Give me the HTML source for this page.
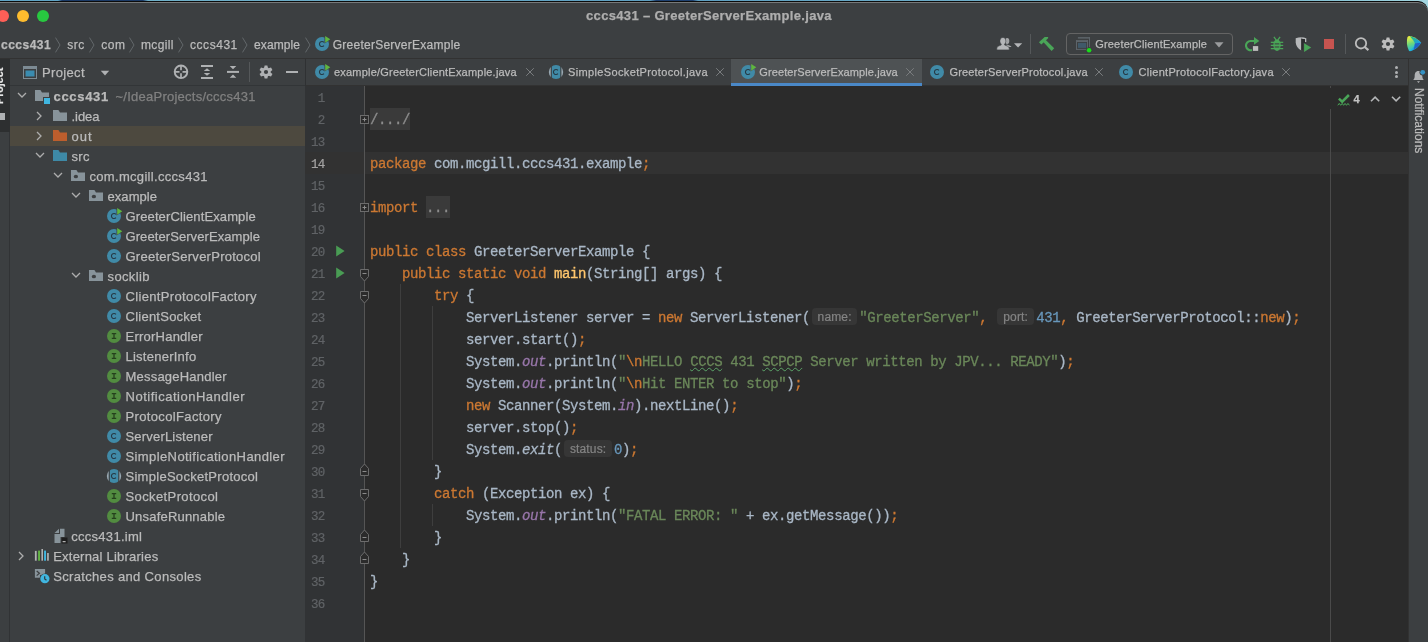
<!DOCTYPE html>
<html><head><meta charset='utf-8'><title>cccs431 – GreeterServerExample.java</title>
<style>
html,body{margin:0;padding:0}
body{width:1428px;height:642px;overflow:hidden;position:relative;background:#3c3f41;font-family:"Liberation Sans", sans-serif;}
#root{position:absolute;left:0;top:0;width:1428px;height:642px;overflow:hidden;will-change:transform}
.b{position:absolute;display:block}
.t{position:absolute;white-space:pre;font-family:"Liberation Sans", sans-serif;-webkit-text-stroke:0.25px currentColor}
.ln{position:absolute;left:300px;width:24.4px;text-align:right;height:22px;font:12.5px/22px "Liberation Mono", monospace;letter-spacing:-0.75px;white-space:pre;margin-top:2px;-webkit-text-stroke:0.2px currentColor}
.cl{position:absolute;left:370px;margin-top:1px;height:22px;font:14px/22px "Liberation Mono", monospace;letter-spacing:-0.4px;white-space:pre;color:#a9b7c6;-webkit-text-stroke:0.3px currentColor}
.fold{background:#3a3a3a;box-shadow:0 -1px 0 #3a3a3a;color:#8c8c8c;display:inline-block;height:21px;vertical-align:top}
.hint{display:inline-block;height:22px;vertical-align:top;position:relative}
.hi{-webkit-text-stroke:0.2px currentColor;position:absolute;left:2px;right:2px;top:1px;height:17px;background:#363636;color:#848484;border-radius:4px;font:12px/19px "Liberation Sans", sans-serif;letter-spacing:0.15px;text-align:center}
.typo{text-decoration:underline wavy #5ba468;text-decoration-thickness:1.2px;text-underline-offset:0.5px;text-decoration-skip-ink:none}
</style></head>
<body>
<div id='root'>
<div class='b' style='left:0;top:0;width:1428px;height:12px;background:linear-gradient(90deg,#5fa3c4 0,#5fa3c4 58px,#1b3a66 62px,#1b3a66 143px,#6fb0c8 148px,#5e9fc0 650px,#1f4170 656px,#1f4170 693px,#5e9fc0 698px,#7fbdd0 1300px,#a2d6e0 1428px)'></div>
<div class='b' style='left:-10px;top:1px;width:1438px;height:660px;background:#3c3f41;border-top:1px solid #0b0b0b;border-top-right-radius:10px;box-shadow:inset 0 1px 0 #77797a'></div>
<div class='b' style='left:-3px;top:10px;width:12px;height:12px;background:#fe5f57;border-radius:50%'></div>
<div class='b' style='left:17px;top:10px;width:12px;height:12px;background:#febc2e;border-radius:50%'></div>
<div class='b' style='left:37px;top:10px;width:12px;height:12px;background:#28c840;border-radius:50%'></div>
<div class='t ' style='left:586.00px;top:5.50px;height:20px;line-height:20px;font-size:13px;color:#aeaeae;letter-spacing:0.333px;font-weight:bold;'>cccs431 – GreeterServerExample.java</div>
<div class='t ' style='left:1.00px;top:35.00px;height:20px;line-height:20px;font-size:12px;color:#bbbbbb;letter-spacing:0.497px;font-weight:bold;'>cccs431</div>
<svg class='b' style='left:53.75px;top:36px;' width='8' height='18' viewBox='0 0 8 18'><path d='M1.5 1.6 L6 9 L1.5 16.4' fill='none' stroke='#62676a' stroke-width='1'/></svg>
<div class='t ' style='left:67.30px;top:35.00px;height:20px;line-height:20px;font-size:12px;color:#bbbbbb;letter-spacing:0.500px;'>src</div>
<svg class='b' style='left:87.75px;top:36px;' width='8' height='18' viewBox='0 0 8 18'><path d='M1.5 1.6 L6 9 L1.5 16.4' fill='none' stroke='#62676a' stroke-width='1'/></svg>
<div class='t ' style='left:101.30px;top:35.00px;height:20px;line-height:20px;font-size:12px;color:#bbbbbb;letter-spacing:0.514px;'>com</div>
<svg class='b' style='left:127.75px;top:36px;' width='8' height='18' viewBox='0 0 8 18'><path d='M1.5 1.6 L6 9 L1.5 16.4' fill='none' stroke='#62676a' stroke-width='1'/></svg>
<div class='t ' style='left:141.00px;top:35.00px;height:20px;line-height:20px;font-size:12px;color:#bbbbbb;letter-spacing:0.326px;'>mcgill</div>
<svg class='b' style='left:176.95px;top:36px;' width='8' height='18' viewBox='0 0 8 18'><path d='M1.5 1.6 L6 9 L1.5 16.4' fill='none' stroke='#62676a' stroke-width='1'/></svg>
<div class='t ' style='left:190.00px;top:35.00px;height:20px;line-height:20px;font-size:12px;color:#bbbbbb;letter-spacing:0.545px;'>cccs431</div>
<svg class='b' style='left:240.85px;top:36px;' width='8' height='18' viewBox='0 0 8 18'><path d='M1.5 1.6 L6 9 L1.5 16.4' fill='none' stroke='#62676a' stroke-width='1'/></svg>
<div class='t ' style='left:254.00px;top:35.00px;height:20px;line-height:20px;font-size:12px;color:#bbbbbb;letter-spacing:0.107px;'>example</div>
<svg class='b' style='left:303.85px;top:36px;' width='8' height='18' viewBox='0 0 8 18'><path d='M1.5 1.6 L6 9 L1.5 16.4' fill='none' stroke='#62676a' stroke-width='1'/></svg>
<svg class='b' style='left:314px;top:36px;overflow:visible' width='16' height='16' viewBox='0 0 16 16'><circle cx='8' cy='8' r='7' fill='#408aa7'/><path d='M10.5 -0.7 L17 3.3 L10.5 7.6 Z' fill='#3c3f41'/><path d='M9.95 9.65 A2.55 2.55 0 1 1 9.95 6.35' fill='none' stroke='#263a45' stroke-width='1.1'/><path d='M11.2 0 L16.3 3.3 L11.2 6.8 Z' fill='#5fb640'/></svg>
<div class='t ' style='left:332.70px;top:35.00px;height:20px;line-height:20px;font-size:12px;color:#bbbbbb;letter-spacing:0.257px;'>GreeterServerExample</div>
<svg class='b' style='left:996px;top:36px;' width='16' height='16' viewBox='0 0 16 16'><g fill='#b4b6b8'><ellipse cx='11.2' cy='5.000' rx='2.1' ry='3' opacity='.85'/><path d='M10.500 8.200 L15.200 10.200 V11 H10.500z' opacity='.85'/><ellipse cx='6.900' cy='5.100' rx='2.900' ry='3.500' stroke='#3c3f41' stroke-width='.8'/><path d='M0.800 13.900 V12 C0.800 10.700 3 9.800 5.200 9 V7.500 H8.600 V9 C10.800 9.800 13.200 10.700 13.200 12 V13.900z' stroke='#3c3f41' stroke-width='.6'/><ellipse cx='6.900' cy='5.100' rx='2.500' ry='3.200'/></g></svg>
<svg class='b' style='left:1014px;top:42.5px;' width='9' height='5' viewBox='0 0 9 5'><path d='M0 0.300H8.200L4.100 4.600z' fill='#b4b6b8'/></svg>
<div class='b' style='left:1030px;top:34px;width:1px;height:20px;background:#55585a;'></div>
<svg class='b' style='left:1038px;top:35px;' width='17' height='17' viewBox='0 0 17 17'><g fill='#4aa558'><path d='M0.900 7.300 L6.700 2.100 H10.100 V3.200 L3.400 9.400z'/><path d='M4.900 6.600 L7.500 4.700 L16.200 13.300 L13.600 15.900z'/></g></svg>
<div class='b' style='left:1066px;top:33px;width:167px;height:22px;box-sizing:border-box;border:1px solid #646464;border-radius:4px'></div>
<svg class='b' style='left:1075px;top:36px;' width='18' height='18' viewBox='0 0 18 18'><g fill='#5d646a'><rect x='2.900' y='1.100' width='12.100' height='1.500'/><rect x='14' y='1.100' width='1' height='10'/><rect x='1' y='4.100' width='12' height='1.900'/><rect x='1' y='4.100' width='1' height='9.800'/><rect x='12' y='4.100' width='1' height='9.800'/><rect x='1' y='12.900' width='12' height='1'/></g><rect x='3' y='6.900' width='8.200' height='5' fill='#40596a'/><circle cx='14.100' cy='14.200' r='3' fill='#3c3f41'/><circle cx='14.100' cy='14.200' r='2.300' fill='#19dd19'/></svg>
<div class='t ' style='left:1095.20px;top:34.00px;height:20px;line-height:20px;font-size:11px;color:#bbbbbb;letter-spacing:0.188px;'>GreeterClientExample</div>
<svg class='b' style='left:1214px;top:41.5px;' width='10' height='6' viewBox='0 0 10 6'><path d='M0.500 0.300H9.500L5 5.500z' fill='#9a9c9e'/></svg>
<svg class='b' style='left:1244.7px;top:36px;' width='16' height='16' viewBox='0 0 16 16'><path d='M9.500 5 H5.800 A4.600 4.600 0 1 0 7.100 13.950' fill='none' stroke='#4aa558' stroke-width='2.100'/><path d='M9 0.900 L14.300 4.900 L9 8.800z' fill='#4aa558'/><rect x='7.200' y='9.400' width='6.800' height='6.300' fill='#3c3f41'/><rect x='7.900' y='10.100' width='5.300' height='4.800' fill='#bdbdbd'/></svg>
<svg class='b' style='left:1269px;top:36px;' width='16' height='16' viewBox='0 0 16 16'><g fill='#4aa558'><ellipse cx='8' cy='9.100' rx='3.700' ry='5.900'/><rect x='1.800' y='5.700' width='12.400' height='1.250'/><rect x='1.800' y='8.800' width='12.400' height='1.250'/><rect x='1.800' y='12' width='12.400' height='1.250'/></g><path d='M4.900 0.900 L7.100 3.800M11.100 0.900 L8.900 3.800' stroke='#4aa558' stroke-width='1.300'/><rect x='5.700' y='7.350' width='4.600' height='1.050' fill='#3c3f41'/><rect x='5.700' y='10.450' width='4.600' height='1.050' fill='#3c3f41'/></svg>
<svg class='b' style='left:1295px;top:36px;' width='17' height='17' viewBox='0 0 17 17'><path d='M0.700 2.300 Q3.500 1.300 6.300 1.300 V14.400 Q1.300 12.200 0.700 6.500z' fill='#b6b8ba'/><path d='M6.300 1.300 Q9 1.300 11.300 2.300 V6 H10 V3.300 Q8 2.700 6.300 2.700z' fill='#b6b8ba'/><path d='M6.300 2.700 Q8 2.700 10 3.300 V7 L9 7 V13 Q7.500 14 6.300 14.400z' fill='#2b2d2e'/><path d='M8.300 6.600 L9.100 7.300 V15.800 L8.300 16.400z' fill='#3c3f41'/><path d='M9.100 7.300 L16.200 11.500 L9.100 16.100z' fill='#4aa558'/></svg>
<div class='b' style='left:1324px;top:39px;width:10px;height:10px;background:#c75450;'></div>
<div class='b' style='left:1345px;top:34px;width:1px;height:20px;background:#55585a;'></div>
<svg class='b' style='left:1354px;top:36px;' width='16' height='16' viewBox='0 0 16 16'><circle cx='7' cy='7.300' r='5.200' fill='none' stroke='#bdbdbd' stroke-width='1.800'/><path d='M10.700 11 L14.400 14.100' stroke='#bdbdbd' stroke-width='2.200'/></svg>
<svg class='b' style='left:1380px;top:36px;' width='16' height='16' viewBox='0 0 16 16'><g fill='#bdbdbd'><circle cx='8' cy='8' r='4.7'/><path d='M6.1 4 L6.6 1.4 H9.4 L9.9 4z' transform='rotate(0 8 8)'/><path d='M6.1 4 L6.6 1.4 H9.4 L9.9 4z' transform='rotate(60 8 8)'/><path d='M6.1 4 L6.6 1.4 H9.4 L9.9 4z' transform='rotate(120 8 8)'/><path d='M6.1 4 L6.6 1.4 H9.4 L9.9 4z' transform='rotate(180 8 8)'/><path d='M6.1 4 L6.6 1.4 H9.4 L9.9 4z' transform='rotate(240 8 8)'/><path d='M6.1 4 L6.6 1.4 H9.4 L9.9 4z' transform='rotate(300 8 8)'/></g><circle cx='8' cy='8' r='2.1' fill='#3c3f41'/></svg>
<svg class='b' style='left:1406px;top:36px;overflow:visible' width='16' height='16' viewBox='0 0 16 16'><defs><linearGradient id='lg1' x1='0.1' y1='0' x2='0.450' y2='1'><stop offset='0' stop-color='#fdf23a'/><stop offset='.5' stop-color='#6fd87a'/><stop offset='1' stop-color='#12b4f0'/></linearGradient><linearGradient id='lg2' x1='0' y1='0' x2='1' y2='0.500'><stop offset='0' stop-color='#2fc46f'/><stop offset='1' stop-color='#1a9be0'/></linearGradient></defs><path d='M1.500 1.100 Q2.500 -0.300 5 0.300 Q11 2 15.200 6.800 Q12 12.500 5 15 Q3.300 15.500 2.800 14.500 Q-0.300 8 1.500 1.100z' fill='url(#lg1)'/><path d='M3.500 0.100 Q10.500 1.800 15.200 6.800 L8.900 7.300 Q7 3.500 3.500 0.100z' fill='url(#lg2)'/><path d='M8.900 7.300 L15.200 6.800 Q12.500 11.500 7.300 14z' fill='#1f62c8'/><path d='M8.900 7.300 Q8.800 11 7.300 14 Q5 15 3.500 15.300 Q8 12 8.900 7.300z' fill='#14a6e8' opacity='.6'/></svg>
<div class='b' style='left:0px;top:58px;width:1428px;height:1px;background:#323232;'></div>
<div class='b' style='left:0px;top:59px;width:10px;height:73px;background:#2d2f30;'></div>
<div class='b' style='left:0;top:59px;width:10px;height:73px;overflow:hidden'><div style='position:absolute;left:-8.1px;top:45px;width:0;height:0'><div style='position:absolute;transform-origin:0 0;transform:rotate(-90deg);white-space:pre;font:bold 10.7px "Liberation Sans", sans-serif;color:#e6e6e6;-webkit-text-stroke:0.2px currentColor;line-height:14px;letter-spacing:0'>Project</div></div></div>
<div class='b' style='left:0px;top:113px;width:5px;height:7px;background:#afb1b3;'></div>
<div class='b' style='left:9px;top:132px;width:1px;height:600px;background:#313335;'></div>
<svg class='b' style='left:23px;top:65.5px;' width='14' height='13' viewBox='0 0 14 13'><rect x='.5' y='.5' width='13' height='12' fill='none' stroke='#7d8b94'/><rect x='.5' y='.5' width='13' height='2.5' fill='#7d8b94'/><rect x='2.5' y='4.5' width='9' height='6' fill='#3a8cb0'/></svg>
<div class='t ' style='left:42.00px;top:63.00px;height:20px;line-height:20px;font-size:13px;color:#bbbbbb;letter-spacing:0.339px;'>Project</div>
<svg class='b' style='left:100px;top:70px;' width='10' height='6' viewBox='0 0 10 6'><path d='M0.800 0.800H9.200L5 5.600z' fill='#afb1b3'/></svg>
<svg class='b' style='left:173px;top:64px;' width='16' height='16' viewBox='0 0 16 16'><circle cx='8' cy='7.8' r='6.3' fill='none' stroke='#afb1b3' stroke-width='1.9'/><path d='M8 1.5v4.8M8 9.3V14M1.5 7.8h5M9.5 7.8H14.5' stroke='#afb1b3' stroke-width='1.7'/></svg>
<svg class='b' style='left:200px;top:64px;' width='14' height='16' viewBox='0 0 14 16'><g fill='#afb1b3'><rect x='1' y='1' width='12' height='2'/><rect x='1' y='13' width='12' height='2'/><path d='M7 4.2L10.2 6.9H3.800zM7 11.800L3.800 9.100h6.400z'/></g></svg>
<svg class='b' style='left:226px;top:64px;' width='14' height='16' viewBox='0 0 14 16'><g fill='#afb1b3'><rect x='1' y='6.900' width='12' height='2'/><path d='M7 5.2L3.700 2.100h6.600zM7 10.600l3.300 3.100H3.700z'/></g></svg>
<div class='b' style='left:249px;top:62px;width:1px;height:20px;background:#55585a;'></div>
<svg class='b' style='left:258px;top:64px;' width='16' height='16' viewBox='0 0 16 16'><g fill='#afb1b3'><circle cx='8' cy='8' r='4.7'/><path d='M6.1 4 L6.6 1.4 H9.4 L9.9 4z' transform='rotate(0 8 8)'/><path d='M6.1 4 L6.6 1.4 H9.4 L9.9 4z' transform='rotate(60 8 8)'/><path d='M6.1 4 L6.6 1.4 H9.4 L9.9 4z' transform='rotate(120 8 8)'/><path d='M6.1 4 L6.6 1.4 H9.4 L9.9 4z' transform='rotate(180 8 8)'/><path d='M6.1 4 L6.6 1.4 H9.4 L9.9 4z' transform='rotate(240 8 8)'/><path d='M6.1 4 L6.6 1.4 H9.4 L9.9 4z' transform='rotate(300 8 8)'/></g><circle cx='8' cy='8' r='2.1' fill='#3c3f41'/></svg>
<div class='b' style='left:286px;top:71px;width:12px;height:2px;background:#afb1b3;'></div>
<div class='b' style='left:10px;top:85px;width:295px;height:1px;background:#323537;'></div>
<div class='b' style='left:10px;top:126px;width:295px;height:20px;background:#4d493f;'></div>
<svg class='b' style='left:15.55px;top:91.25px;' width='12' height='8' viewBox='0 0 12 8'><path d='M2 2 L6 6 L10 2' fill='none' stroke='#adadad' stroke-width='1.3'/></svg>
<svg class='b' style='left:34px;top:88px;overflow:visible' width='16' height='16' viewBox='0 0 16 16'><path d='M1 2 H6.4 L8 4.5 H15 V13 H1 Z' fill='#87939a'/><rect x='9' y='9' width='8' height='8' fill='#3c3f41'/><rect x='10' y='10' width='6' height='6' fill='#40b6e0'/></svg>
<div class='t ' style='left:53.50px;top:87.00px;height:20px;line-height:20px;font-size:13px;color:#bbbbbb;letter-spacing:0.679px;font-weight:bold;'>cccs431</div>
<div class='t ' style='left:115.50px;top:87.00px;height:20px;line-height:20px;font-size:13px;color:#808080;letter-spacing:0.249px;'>~/IdeaProjects/cccs431</div>
<svg class='b' style='left:35.2px;top:109.65px;' width='8' height='12' viewBox='0 0 8 12'><path d='M2 2 L6 6 L2 10' fill='none' stroke='#adadad' stroke-width='1.3'/></svg>
<svg class='b' style='left:52px;top:108px;overflow:visible' width='16' height='16' viewBox='0 0 16 16'><path d='M1 2 H6.4 L8 4.5 H15 V13 H1 Z' fill='#87939a'/></svg>
<div class='t ' style='left:71.50px;top:107.00px;height:20px;line-height:20px;font-size:13px;color:#bbbbbb;letter-spacing:-0.051px;'>.idea</div>
<svg class='b' style='left:35.2px;top:129.65px;' width='8' height='12' viewBox='0 0 8 12'><path d='M2 2 L6 6 L2 10' fill='none' stroke='#adadad' stroke-width='1.3'/></svg>
<svg class='b' style='left:52px;top:128px;overflow:visible' width='16' height='16' viewBox='0 0 16 16'><path d='M1 2 H6.4 L8 4.5 H15 V13 H1 Z' fill='#bd5e2d'/></svg>
<div class='t ' style='left:71.50px;top:127.00px;height:20px;line-height:20px;font-size:13px;color:#bbbbbb;letter-spacing:0.961px;'>out</div>
<svg class='b' style='left:33.55px;top:151.25px;' width='12' height='8' viewBox='0 0 12 8'><path d='M2 2 L6 6 L10 2' fill='none' stroke='#adadad' stroke-width='1.3'/></svg>
<svg class='b' style='left:52px;top:148px;overflow:visible' width='16' height='16' viewBox='0 0 16 16'><path d='M1 2 H6.4 L8 4.5 H15 V13 H1 Z' fill='#3e89a6'/></svg>
<div class='t ' style='left:71.50px;top:147.00px;height:20px;line-height:20px;font-size:13px;color:#bbbbbb;letter-spacing:0.328px;'>src</div>
<svg class='b' style='left:51.55px;top:171.25px;' width='12' height='8' viewBox='0 0 12 8'><path d='M2 2 L6 6 L10 2' fill='none' stroke='#adadad' stroke-width='1.3'/></svg>
<svg class='b' style='left:70px;top:168px;overflow:visible' width='16' height='16' viewBox='0 0 16 16'><path d='M1 2 H6.4 L8 4.5 H15 V13 H1 Z' fill='#87939a'/><ellipse cx='5.9' cy='8.5' rx='2.1' ry='1.85' fill='#3c3f41'/></svg>
<div class='t ' style='left:89.50px;top:167.00px;height:20px;line-height:20px;font-size:13px;color:#bbbbbb;letter-spacing:0.312px;'>com.mcgill.cccs431</div>
<svg class='b' style='left:69.55px;top:191.25px;' width='12' height='8' viewBox='0 0 12 8'><path d='M2 2 L6 6 L10 2' fill='none' stroke='#adadad' stroke-width='1.3'/></svg>
<svg class='b' style='left:88px;top:188px;overflow:visible' width='16' height='16' viewBox='0 0 16 16'><path d='M1 2 H6.4 L8 4.5 H15 V13 H1 Z' fill='#87939a'/><ellipse cx='5.9' cy='8.5' rx='2.1' ry='1.85' fill='#3c3f41'/></svg>
<div class='t ' style='left:107.50px;top:187.00px;height:20px;line-height:20px;font-size:13px;color:#bbbbbb;letter-spacing:0.060px;'>example</div>
<svg class='b' style='left:106px;top:208px;overflow:visible' width='16' height='16' viewBox='0 0 16 16'><circle cx='8' cy='8' r='7' fill='#408aa7'/><path d='M10.5 -0.7 L17 3.3 L10.5 7.6 Z' fill='#3c3f41'/><path d='M9.95 9.65 A2.55 2.55 0 1 1 9.95 6.35' fill='none' stroke='#263a45' stroke-width='1.1'/><path d='M11.2 0 L16.3 3.3 L11.2 6.8 Z' fill='#5fb640'/></svg>
<div class='t ' style='left:125.50px;top:207.00px;height:20px;line-height:20px;font-size:13px;color:#bbbbbb;letter-spacing:0.122px;'>GreeterClientExample</div>
<svg class='b' style='left:106px;top:228px;overflow:visible' width='16' height='16' viewBox='0 0 16 16'><circle cx='8' cy='8' r='7' fill='#408aa7'/><path d='M10.5 -0.7 L17 3.3 L10.5 7.6 Z' fill='#3c3f41'/><path d='M9.95 9.65 A2.55 2.55 0 1 1 9.95 6.35' fill='none' stroke='#263a45' stroke-width='1.1'/><path d='M11.2 0 L16.3 3.3 L11.2 6.8 Z' fill='#5fb640'/></svg>
<div class='t ' style='left:125.50px;top:227.00px;height:20px;line-height:20px;font-size:13px;color:#bbbbbb;letter-spacing:0.081px;'>GreeterServerExample</div>
<svg class='b' style='left:106px;top:248px;overflow:visible' width='16' height='16' viewBox='0 0 16 16'><circle cx='8' cy='8' r='7' fill='#408aa7'/><path d='M9.95 9.65 A2.55 2.55 0 1 1 9.95 6.35' fill='none' stroke='#263a45' stroke-width='1.1'/></svg>
<div class='t ' style='left:125.50px;top:247.00px;height:20px;line-height:20px;font-size:13px;color:#bbbbbb;letter-spacing:0.257px;'>GreeterServerProtocol</div>
<svg class='b' style='left:69.55px;top:271.25px;' width='12' height='8' viewBox='0 0 12 8'><path d='M2 2 L6 6 L10 2' fill='none' stroke='#adadad' stroke-width='1.3'/></svg>
<svg class='b' style='left:88px;top:268px;overflow:visible' width='16' height='16' viewBox='0 0 16 16'><path d='M1 2 H6.4 L8 4.5 H15 V13 H1 Z' fill='#87939a'/><ellipse cx='5.9' cy='8.5' rx='2.1' ry='1.85' fill='#3c3f41'/></svg>
<div class='t ' style='left:107.50px;top:267.00px;height:20px;line-height:20px;font-size:13px;color:#bbbbbb;letter-spacing:0.375px;'>socklib</div>
<svg class='b' style='left:106px;top:288px;overflow:visible' width='16' height='16' viewBox='0 0 16 16'><circle cx='8' cy='8' r='7' fill='#408aa7'/><path d='M9.95 9.65 A2.55 2.55 0 1 1 9.95 6.35' fill='none' stroke='#263a45' stroke-width='1.1'/></svg>
<div class='t ' style='left:125.50px;top:287.00px;height:20px;line-height:20px;font-size:13px;color:#bbbbbb;letter-spacing:0.336px;'>ClientProtocolFactory</div>
<svg class='b' style='left:106px;top:308px;overflow:visible' width='16' height='16' viewBox='0 0 16 16'><circle cx='8' cy='8' r='7' fill='#408aa7'/><path d='M9.95 9.65 A2.55 2.55 0 1 1 9.95 6.35' fill='none' stroke='#263a45' stroke-width='1.1'/></svg>
<div class='t ' style='left:125.50px;top:307.00px;height:20px;line-height:20px;font-size:13px;color:#bbbbbb;letter-spacing:0.247px;'>ClientSocket</div>
<svg class='b' style='left:106px;top:328px;overflow:visible' width='16' height='16' viewBox='0 0 16 16'><circle cx='8' cy='8' r='7' fill='#528c40'/><path d='M5.8 5.1h4.4v1.2H8.65v3.4h1.55v1.2H5.8V9.7h1.55V6.3H5.8z' fill='#25401c'/></svg>
<div class='t ' style='left:125.50px;top:327.00px;height:20px;line-height:20px;font-size:13px;color:#bbbbbb;letter-spacing:0.234px;'>ErrorHandler</div>
<svg class='b' style='left:106px;top:348px;overflow:visible' width='16' height='16' viewBox='0 0 16 16'><circle cx='8' cy='8' r='7' fill='#528c40'/><path d='M5.8 5.1h4.4v1.2H8.65v3.4h1.55v1.2H5.8V9.7h1.55V6.3H5.8z' fill='#25401c'/></svg>
<div class='t ' style='left:125.50px;top:347.00px;height:20px;line-height:20px;font-size:13px;color:#bbbbbb;letter-spacing:0.251px;'>ListenerInfo</div>
<svg class='b' style='left:106px;top:368px;overflow:visible' width='16' height='16' viewBox='0 0 16 16'><circle cx='8' cy='8' r='7' fill='#528c40'/><path d='M5.8 5.1h4.4v1.2H8.65v3.4h1.55v1.2H5.8V9.7h1.55V6.3H5.8z' fill='#25401c'/></svg>
<div class='t ' style='left:125.50px;top:367.00px;height:20px;line-height:20px;font-size:13px;color:#bbbbbb;letter-spacing:0.209px;'>MessageHandler</div>
<svg class='b' style='left:106px;top:388px;overflow:visible' width='16' height='16' viewBox='0 0 16 16'><circle cx='8' cy='8' r='7' fill='#528c40'/><path d='M5.8 5.1h4.4v1.2H8.65v3.4h1.55v1.2H5.8V9.7h1.55V6.3H5.8z' fill='#25401c'/></svg>
<div class='t ' style='left:125.50px;top:387.00px;height:20px;line-height:20px;font-size:13px;color:#bbbbbb;letter-spacing:0.509px;'>NotificationHandler</div>
<svg class='b' style='left:106px;top:408px;overflow:visible' width='16' height='16' viewBox='0 0 16 16'><circle cx='8' cy='8' r='7' fill='#528c40'/><path d='M5.8 5.1h4.4v1.2H8.65v3.4h1.55v1.2H5.8V9.7h1.55V6.3H5.8z' fill='#25401c'/></svg>
<div class='t ' style='left:125.50px;top:407.00px;height:20px;line-height:20px;font-size:13px;color:#bbbbbb;letter-spacing:0.354px;'>ProtocolFactory</div>
<svg class='b' style='left:106px;top:428px;overflow:visible' width='16' height='16' viewBox='0 0 16 16'><circle cx='8' cy='8' r='7' fill='#408aa7'/><path d='M9.95 9.65 A2.55 2.55 0 1 1 9.95 6.35' fill='none' stroke='#263a45' stroke-width='1.1'/></svg>
<div class='t ' style='left:125.50px;top:427.00px;height:20px;line-height:20px;font-size:13px;color:#bbbbbb;letter-spacing:0.189px;'>ServerListener</div>
<svg class='b' style='left:106px;top:448px;overflow:visible' width='16' height='16' viewBox='0 0 16 16'><circle cx='8' cy='8' r='7' fill='#408aa7'/><path d='M9.95 9.65 A2.55 2.55 0 1 1 9.95 6.35' fill='none' stroke='#263a45' stroke-width='1.1'/></svg>
<div class='t ' style='left:125.50px;top:447.00px;height:20px;line-height:20px;font-size:13px;color:#bbbbbb;letter-spacing:0.393px;'>SimpleNotificationHandler</div>
<svg class='b' style='left:106px;top:468px;overflow:visible' width='16' height='16' viewBox='0 0 16 16'><defs><clipPath id='cpm'><rect x='3.85' y='0' width='8.4' height='16'/></clipPath><clipPath id='cpl'><rect x='0' y='0' width='2.7' height='16'/></clipPath><clipPath id='cpr'><rect x='13.4' y='0' width='2.7' height='16'/></clipPath></defs><circle cx='8' cy='8' r='7' fill='#408aa7' clip-path='url(#cpm)'/><circle cx='8' cy='8' r='7.2' fill='#98a8b2' clip-path='url(#cpl)'/><circle cx='8' cy='8' r='7.2' fill='#98a8b2' clip-path='url(#cpr)'/><path d='M9.95 9.65 A2.55 2.55 0 1 1 9.95 6.35' fill='none' stroke='#263a45' stroke-width='1.1'/></svg>
<div class='t ' style='left:125.50px;top:467.00px;height:20px;line-height:20px;font-size:13px;color:#bbbbbb;letter-spacing:0.280px;'>SimpleSocketProtocol</div>
<svg class='b' style='left:106px;top:488px;overflow:visible' width='16' height='16' viewBox='0 0 16 16'><circle cx='8' cy='8' r='7' fill='#528c40'/><path d='M5.8 5.1h4.4v1.2H8.65v3.4h1.55v1.2H5.8V9.7h1.55V6.3H5.8z' fill='#25401c'/></svg>
<div class='t ' style='left:125.50px;top:487.00px;height:20px;line-height:20px;font-size:13px;color:#bbbbbb;letter-spacing:0.389px;'>SocketProtocol</div>
<svg class='b' style='left:106px;top:508px;overflow:visible' width='16' height='16' viewBox='0 0 16 16'><circle cx='8' cy='8' r='7' fill='#528c40'/><path d='M5.8 5.1h4.4v1.2H8.65v3.4h1.55v1.2H5.8V9.7h1.55V6.3H5.8z' fill='#25401c'/></svg>
<div class='t ' style='left:125.50px;top:507.00px;height:20px;line-height:20px;font-size:13px;color:#bbbbbb;letter-spacing:0.203px;'>UnsafeRunnable</div>
<svg class='b' style='left:53.4px;top:527.8px;' width='16' height='16' viewBox='0 0 16 16'><path d='M1.500 5 L6 .8 V5z' fill='#87939a'/><path d='M7 .8 H11.500 V9 H7.500 V15 H1.500 V6 H7z' fill='#87939a'/><rect x='8.500' y='9.500' width='6' height='6' fill='#1e1e1e'/><rect x='9.600' y='13.200' width='3' height='1' fill='#d8d8d8'/></svg>
<div class='t ' style='left:71.20px;top:527.00px;height:20px;line-height:20px;font-size:13px;color:#bbbbbb;letter-spacing:0.288px;'>cccs431.iml</div>
<svg class='b' style='left:17.3px;top:549.7px;' width='8' height='12' viewBox='0 0 8 12'><path d='M2 2 L6 6 L2 10' fill='none' stroke='#adadad' stroke-width='1.3'/></svg>
<svg class='b' style='left:34px;top:548px;' width='16' height='16' viewBox='0 0 16 16'><rect x='0.9' y='2.9' width='1.8' height='9.8' fill='#afb1b3'/><rect x='4.1' y='2.600' width='1.900' height='10.100' fill='#62b543'/><rect x='7.400' y='1' width='1.600' height='11.700' fill='#afb1b3'/><rect x='10.100' y='2.600' width='1.900' height='10.100' fill='#40b6e0'/><rect x='13.100' y='5' width='1.700' height='7.700' fill='#afb1b3'/></svg>
<div class='t ' style='left:53.20px;top:547.00px;height:20px;line-height:20px;font-size:13px;color:#bbbbbb;letter-spacing:0.226px;'>External Libraries</div>
<svg class='b' style='left:34px;top:567px;' width='17' height='17' viewBox='0 0 17 17'><path d='M0.900 2.100 H11.100 V8 H6 V10.800 H0.900z' fill='#87939a'/><path d='M2.700 4 L5.400 6.300 L2.700 8.600' fill='none' stroke='#3c3f41' stroke-width='1.200'/><circle cx='10.900' cy='11.700' r='5.300' fill='#3c3f41'/><circle cx='10.900' cy='11.700' r='4.600' fill='#40b6e0'/><path d='M10.700 9.200 V12 L12.500 13.300' fill='none' stroke='#2b3a42' stroke-width='1.200'/></svg>
<div class='t ' style='left:53.20px;top:567.00px;height:20px;line-height:20px;font-size:13px;color:#bbbbbb;letter-spacing:0.337px;'>Scratches and Consoles</div>
<div class='b' style='left:305px;top:59px;width:1px;height:27px;background:#2f3133;'></div>
<div class='b' style='left:306px;top:85px;width:1102px;height:1px;background:#323232;'></div>
<div class='b' style='left:731px;top:59px;width:190.5px;height:27px;background:#4e5254;'></div>
<div class='b' style='left:731px;top:83px;width:190.5px;height:3px;background:#4a88c7;'></div>
<svg class='b' style='left:314px;top:64px;overflow:visible' width='16' height='16' viewBox='0 0 16 16'><circle cx='8' cy='8' r='7' fill='#408aa7'/><path d='M10.5 -0.7 L17 3.3 L10.5 7.6 Z' fill='#3c3f41'/><path d='M9.95 9.65 A2.55 2.55 0 1 1 9.95 6.35' fill='none' stroke='#263a45' stroke-width='1.1'/><path d='M11.2 0 L16.3 3.3 L11.2 6.8 Z' fill='#5fb640'/></svg>
<div class='t ' style='left:334.00px;top:62.00px;height:20px;line-height:20px;font-size:11px;color:#bbbbbb;letter-spacing:0.206px;'>example/GreeterClientExample.java</div>
<svg class='b' style='left:524.5px;top:67px;' width='10' height='10' viewBox='0 0 10 10'><path d='M1.200 1.200L8.800 8.800M8.800 1.200L1.200 8.800' stroke='#7a7d7f' stroke-width='1'/></svg>
<svg class='b' style='left:548px;top:64px;overflow:visible' width='16' height='16' viewBox='0 0 16 16'><defs><clipPath id='cpm'><rect x='3.85' y='0' width='8.4' height='16'/></clipPath><clipPath id='cpl'><rect x='0' y='0' width='2.7' height='16'/></clipPath><clipPath id='cpr'><rect x='13.4' y='0' width='2.7' height='16'/></clipPath></defs><circle cx='8' cy='8' r='7' fill='#408aa7' clip-path='url(#cpm)'/><circle cx='8' cy='8' r='7.2' fill='#98a8b2' clip-path='url(#cpl)'/><circle cx='8' cy='8' r='7.2' fill='#98a8b2' clip-path='url(#cpr)'/><path d='M9.95 9.65 A2.55 2.55 0 1 1 9.95 6.35' fill='none' stroke='#263a45' stroke-width='1.1'/></svg>
<div class='t ' style='left:568.00px;top:62.00px;height:20px;line-height:20px;font-size:11px;color:#bbbbbb;letter-spacing:0.361px;'>SimpleSocketProtocol.java</div>
<svg class='b' style='left:715px;top:67px;' width='10' height='10' viewBox='0 0 10 10'><path d='M1.200 1.200L8.800 8.800M8.800 1.200L1.200 8.800' stroke='#7a7d7f' stroke-width='1'/></svg>
<svg class='b' style='left:739.5px;top:64px;overflow:visible' width='16' height='16' viewBox='0 0 16 16'><circle cx='8' cy='8' r='7' fill='#408aa7'/><path d='M10.5 -0.7 L17 3.3 L10.5 7.6 Z' fill='#4e5254'/><path d='M9.95 9.65 A2.55 2.55 0 1 1 9.95 6.35' fill='none' stroke='#263a45' stroke-width='1.1'/><path d='M11.2 0 L16.3 3.3 L11.2 6.8 Z' fill='#5fb640'/></svg>
<div class='t ' style='left:759.30px;top:62.00px;height:20px;line-height:20px;font-size:11px;color:#bbbbbb;letter-spacing:0.111px;'>GreeterServerExample.java</div>
<svg class='b' style='left:905px;top:67px;' width='10' height='10' viewBox='0 0 10 10'><path d='M1.200 1.200L8.800 8.800M8.800 1.200L1.200 8.800' stroke='#7a7d7f' stroke-width='1'/></svg>
<svg class='b' style='left:929px;top:64px;overflow:visible' width='16' height='16' viewBox='0 0 16 16'><circle cx='8' cy='8' r='7' fill='#408aa7'/><path d='M9.95 9.65 A2.55 2.55 0 1 1 9.95 6.35' fill='none' stroke='#263a45' stroke-width='1.1'/></svg>
<div class='t ' style='left:949.40px;top:62.00px;height:20px;line-height:20px;font-size:11px;color:#bbbbbb;letter-spacing:0.193px;'>GreeterServerProtocol.java</div>
<svg class='b' style='left:1094px;top:67px;' width='10' height='10' viewBox='0 0 10 10'><path d='M1.200 1.200L8.800 8.800M8.800 1.200L1.200 8.800' stroke='#7a7d7f' stroke-width='1'/></svg>
<svg class='b' style='left:1118px;top:64px;overflow:visible' width='16' height='16' viewBox='0 0 16 16'><circle cx='8' cy='8' r='7' fill='#408aa7'/><path d='M9.95 9.65 A2.55 2.55 0 1 1 9.95 6.35' fill='none' stroke='#263a45' stroke-width='1.1'/></svg>
<div class='t ' style='left:1138.50px;top:62.00px;height:20px;line-height:20px;font-size:11px;color:#bbbbbb;letter-spacing:0.297px;'>ClientProtocolFactory.java</div>
<svg class='b' style='left:1281px;top:67px;' width='10' height='10' viewBox='0 0 10 10'><path d='M1.200 1.200L8.800 8.800M8.800 1.200L1.200 8.800' stroke='#7a7d7f' stroke-width='1'/></svg>
<div class='b' style='left:1394.5px;top:65.7px;width:3px;height:3px;background:#afb1b3;border-radius:50%'></div>
<div class='b' style='left:1394.5px;top:70.5px;width:3px;height:3px;background:#afb1b3;border-radius:50%'></div>
<div class='b' style='left:1394.5px;top:75.3px;width:3px;height:3px;background:#afb1b3;border-radius:50%'></div>
<div class='b' style='left:1408px;top:59px;width:1px;height:600px;background:#323232;'></div>
<svg class='b' style='left:1412px;top:69px;' width='14' height='15' viewBox='0 0 14 15'><path d='M6.500 2 C3.500 2 2.700 4.500 2.700 7 C2.700 9 2 10 1.200 11 H11.800 C11 10 10.300 9 10.300 7 C10.300 4.500 9.500 2 6.500 2z' fill='#afb1b3'/><path d='M5 12.300 H8 L6.500 14z' fill='#afb1b3'/><circle cx='10.700' cy='3.300' r='3.200' fill='#3c3f41'/><circle cx='10.700' cy='3.300' r='2.400' fill='#3592c4'/></svg>
<div class='b' style='left:1425.8px;top:87.5px;width:0;height:0'><div style='position:absolute;transform-origin:0 0;transform:rotate(90deg);white-space:pre;font:12px "Liberation Sans", sans-serif;color:#bbbbbb;-webkit-text-stroke:0.25px currentColor;line-height:14px;letter-spacing:0'>Notifications</div></div>
<div class='b' style='left:305px;top:86px;width:59px;height:560px;background:#313335;'></div>
<div class='b' style='left:365px;top:86px;width:1043px;height:560px;background:#2b2b2b;'></div>
<div class='b' style='left:305px;top:152px;width:1103px;height:22px;background:#323232;'></div>
<div class='b' style='left:364px;top:86px;width:1px;height:560px;background:#555555;'></div>
<div class='b' style='left:1330px;top:86px;width:1px;height:2px;background:#4a4a4a;'></div>
<div class='b' style='left:1330px;top:109px;width:1px;height:540px;background:#4a4a4a;'></div>
<div class='b' style='left:400px;top:284px;width:1px;height:264px;background:#3e3e3e;'></div>
<div class='b' style='left:432px;top:306px;width:1px;height:154px;background:#3e3e3e;'></div>
<div class='b' style='left:432px;top:504px;width:1px;height:22px;background:#3e3e3e;'></div>
<div class='ln' style='top:86px;color:#606366'>1</div>
<div class='ln' style='top:108px;color:#606366'>2</div>
<div class='cl' style='top:108px'><span class='fold'>/.../</span></div>
<div class='ln' style='top:130px;color:#606366'>13</div>
<div class='ln' style='top:152px;color:#a4a3a3'>14</div>
<div class='cl' style='top:152px'><span style='color:#cc7832;'>package </span><span style='color:#a9b7c6;'>com.mcgill.cccs431.example</span><span style='color:#cc7832;'>;</span></div>
<div class='ln' style='top:174px;color:#606366'>15</div>
<div class='ln' style='top:196px;color:#606366'>16</div>
<div class='cl' style='top:196px'><span style='color:#cc7832;'>import </span><span class='fold'>...</span></div>
<div class='ln' style='top:218px;color:#606366'>19</div>
<div class='ln' style='top:240px;color:#606366'>20</div>
<div class='cl' style='top:240px'><span style='color:#cc7832;'>public class </span><span style='color:#a9b7c6;'>GreeterServerExample {</span></div>
<div class='ln' style='top:262px;color:#606366'>21</div>
<div class='cl' style='top:262px'>    <span style='color:#cc7832;'>public static void </span><span style='color:#ffc66d;'>main</span><span style='color:#a9b7c6;'>(String[] args) {</span></div>
<div class='ln' style='top:284px;color:#606366'>22</div>
<div class='cl' style='top:284px'>        <span style='color:#cc7832;'>try </span><span style='color:#a9b7c6;'>{</span></div>
<div class='ln' style='top:306px;color:#606366'>23</div>
<div class='cl' style='top:306px'>            <span style='color:#a9b7c6;'>ServerListener server = </span><span style='color:#cc7832;'>new </span><span style='color:#a9b7c6;'>ServerListener(</span><span class='hint' style='width:49px'><span class='hi'>name:</span></span><span style='color:#6a8759;'>&quot;GreeterServer&quot;</span><span style='color:#cc7832;'>, </span><span class='hint' style='width:41px'><span class='hi'>port:</span></span><span style='color:#6897bb;'>431</span><span style='color:#cc7832;'>, </span><span style='color:#a9b7c6;'>GreeterServerProtocol::</span><span style='color:#cc7832;'>new</span><span style='color:#a9b7c6;'>)</span><span style='color:#cc7832;'>;</span></div>
<div class='ln' style='top:328px;color:#606366'>24</div>
<div class='cl' style='top:328px'>            <span style='color:#a9b7c6;'>server.start()</span><span style='color:#cc7832;'>;</span></div>
<div class='ln' style='top:350px;color:#606366'>25</div>
<div class='cl' style='top:350px'>            <span style='color:#a9b7c6;'>System.</span><span style='color:#9876aa;font-style:italic;'>out</span><span style='color:#a9b7c6;'>.println(</span><span style='color:#6a8759;'>&quot;</span><span style='color:#cc7832;'>\n</span><span style='color:#6a8759;'>HELLO </span><span class='typo' style='color:#6a8759'>CCCS</span><span style='color:#6a8759;'> 431 </span><span class='typo' style='color:#6a8759'>SCPCP</span><span style='color:#6a8759;'> Server written by JPV... READY&quot;</span><span style='color:#a9b7c6;'>)</span><span style='color:#cc7832;'>;</span></div>
<div class='ln' style='top:372px;color:#606366'>26</div>
<div class='cl' style='top:372px'>            <span style='color:#a9b7c6;'>System.</span><span style='color:#9876aa;font-style:italic;'>out</span><span style='color:#a9b7c6;'>.println(</span><span style='color:#6a8759;'>&quot;</span><span style='color:#cc7832;'>\n</span><span style='color:#6a8759;'>Hit ENTER to stop&quot;</span><span style='color:#a9b7c6;'>)</span><span style='color:#cc7832;'>;</span></div>
<div class='ln' style='top:394px;color:#606366'>27</div>
<div class='cl' style='top:394px'>            <span style='color:#cc7832;'>new </span><span style='color:#a9b7c6;'>Scanner(System.</span><span style='color:#9876aa;font-style:italic;'>in</span><span style='color:#a9b7c6;'>).nextLine()</span><span style='color:#cc7832;'>;</span></div>
<div class='ln' style='top:416px;color:#606366'>28</div>
<div class='cl' style='top:416px'>            <span style='color:#a9b7c6;'>server.stop()</span><span style='color:#cc7832;'>;</span></div>
<div class='ln' style='top:438px;color:#606366'>29</div>
<div class='cl' style='top:438px'>            <span style='color:#a9b7c6;'>System.</span><span style='color:#a9b7c6;font-style:italic;'>exit</span><span style='color:#a9b7c6;'>(</span><span class='hint' style='width:52px'><span class='hi'>status:</span></span><span style='color:#6897bb;'>0</span><span style='color:#a9b7c6;'>)</span><span style='color:#cc7832;'>;</span></div>
<div class='ln' style='top:460px;color:#606366'>30</div>
<div class='cl' style='top:460px'>        <span style='color:#a9b7c6;'>}</span></div>
<div class='ln' style='top:482px;color:#606366'>31</div>
<div class='cl' style='top:482px'>        <span style='color:#cc7832;'>catch </span><span style='color:#a9b7c6;'>(Exception ex) {</span></div>
<div class='ln' style='top:504px;color:#606366'>32</div>
<div class='cl' style='top:504px'>            <span style='color:#a9b7c6;'>System.</span><span style='color:#9876aa;font-style:italic;'>out</span><span style='color:#a9b7c6;'>.println(</span><span style='color:#6a8759;'>&quot;FATAL ERROR: &quot;</span><span style='color:#a9b7c6;'> + ex.getMessage())</span><span style='color:#cc7832;'>;</span></div>
<div class='ln' style='top:526px;color:#606366'>33</div>
<div class='cl' style='top:526px'>        <span style='color:#a9b7c6;'>}</span></div>
<div class='ln' style='top:548px;color:#606366'>34</div>
<div class='cl' style='top:548px'>    <span style='color:#a9b7c6;'>}</span></div>
<div class='ln' style='top:570px;color:#606366'>35</div>
<div class='cl' style='top:570px'><span style='color:#a9b7c6;'>}</span></div>
<div class='ln' style='top:592px;color:#606366'>36</div>
<svg class='b' style='left:334px;top:244px;' width='12' height='14' viewBox='0 0 12 14'><path d='M2.200 1.500 L10.600 7 L2.200 12.500z' fill='#499c54'/></svg>
<svg class='b' style='left:334px;top:266px;' width='12' height='14' viewBox='0 0 12 14'><path d='M2.200 1.500 L10.600 7 L2.200 12.500z' fill='#499c54'/></svg>
<svg class='b' style='left:360px;top:114.5px;' width='9' height='9' viewBox='0 0 9 9'><rect x='.5' y='.5' width='8' height='8' fill='#2b2b2b' stroke='#6c6c6c'/><path d='M2.500 4.500h4M4.500 2.500v4' stroke='#8a8a8a' stroke-width='1'/></svg>
<svg class='b' style='left:360px;top:202.5px;' width='9' height='9' viewBox='0 0 9 9'><rect x='.5' y='.5' width='8' height='8' fill='#2b2b2b' stroke='#6c6c6c'/><path d='M2.500 4.500h4M4.500 2.500v4' stroke='#8a8a8a' stroke-width='1'/></svg>
<svg class='b' style='left:360px;top:269px;' width='9' height='13' viewBox='0 0 9 13'><path d='M.5 .5 H8.5 V7.5 L4.5 12 L.5 7.5z' fill='#2b2b2b' stroke='#6c6c6c'/><path d='M2.5 4.5h4' stroke='#8a8a8a'/></svg>
<svg class='b' style='left:360px;top:291px;' width='9' height='13' viewBox='0 0 9 13'><path d='M.5 .5 H8.5 V7.5 L4.5 12 L.5 7.5z' fill='#2b2b2b' stroke='#6c6c6c'/><path d='M2.5 4.5h4' stroke='#8a8a8a'/></svg>
<svg class='b' style='left:360px;top:463px;' width='9' height='13' viewBox='0 0 9 13'><path d='M.5 12.5 H8.5 V5.5 L4.5 1 L.5 5.5z' fill='#2b2b2b' stroke='#6c6c6c'/><path d='M2.5 8.5h4' stroke='#8a8a8a'/></svg>
<svg class='b' style='left:360px;top:489px;' width='9' height='13' viewBox='0 0 9 13'><path d='M.5 .5 H8.5 V7.5 L4.5 12 L.5 7.5z' fill='#2b2b2b' stroke='#6c6c6c'/><path d='M2.5 4.5h4' stroke='#8a8a8a'/></svg>
<svg class='b' style='left:360px;top:529px;' width='9' height='13' viewBox='0 0 9 13'><path d='M.5 12.5 H8.5 V5.5 L4.5 1 L.5 5.5z' fill='#2b2b2b' stroke='#6c6c6c'/><path d='M2.5 8.5h4' stroke='#8a8a8a'/></svg>
<svg class='b' style='left:360px;top:551px;' width='9' height='13' viewBox='0 0 9 13'><path d='M.5 12.5 H8.5 V5.5 L4.5 1 L.5 5.5z' fill='#2b2b2b' stroke='#6c6c6c'/><path d='M2.5 8.5h4' stroke='#8a8a8a'/></svg>
<svg class='b' style='left:1337px;top:92px;' width='14' height='15' viewBox='0 0 14 15'><path d='M1.900 6.600 L5.200 9.700 L11.900 3' fill='none' stroke='#4aa558' stroke-width='2.500'/><path d='M0.800 13.300 l1.450-1.900 1.450 1.900 1.450-1.900 1.450 1.900 1.450-1.900 1.450 1.900 1.450-1.900 1.450 1.900' fill='none' stroke='#4aa558' stroke-width='1'/></svg>
<div class='t ' style='left:1353.40px;top:89.00px;height:20px;line-height:20px;font-size:11px;color:#c4c4c4;letter-spacing:0.075px;font-weight:bold;'>4</div>
<svg class='b' style='left:1370px;top:95px;' width='10' height='8' viewBox='0 0 10 8'><path d='M1 6.200 L5.100 2.100 L9.200 6.200' fill='none' stroke='#b4b6b8' stroke-width='1.600'/></svg>
<svg class='b' style='left:1391px;top:95px;' width='10' height='8' viewBox='0 0 10 8'><path d='M1 1.800 L5.100 5.900 L9.200 1.800' fill='none' stroke='#b4b6b8' stroke-width='1.600'/></svg>
</div>
</body></html>
